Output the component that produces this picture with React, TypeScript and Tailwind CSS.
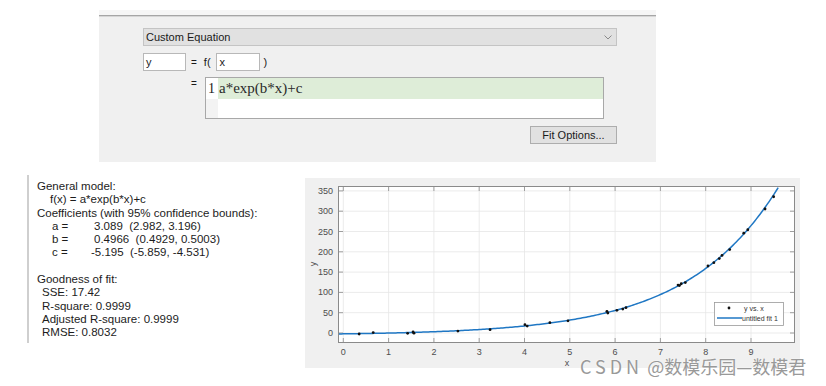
import React from "react";

const f = (x: number) => 3.089 * Math.exp(0.4966 * x) - 5.195;
const px = (x: number) => 38.3 + 45.3 * x;
const py = (y: number) => 155 - 0.406 * y;

// sampled data (x, small noise on y)
const data: [number, number][] = [
  [0.35, 1], [0.66, -2], [1.42, 2], [1.54, -1], [1.56, 2], [2.53, 1],
  [3.24, 2], [4.01, -3], [4.06, 1], [4.56, -1], [4.96, 1], [5.82, -3],
  [5.84, 2], [6.04, 1], [6.17, 2], [6.24, 1], [7.39, -2], [7.42, 1],
  [7.46, -1], [7.55, 2], [8.05, -2], [8.18, 1], [8.3, 2], [8.36, 0],
  [8.53, 3], [8.84, -2], [8.93, 1], [9.31, 4], [9.5, 5],
];

const curve = () => {
  const parts: string[] = [];
  for (let x = -0.12; x <= 9.63; x += 0.04) {
    parts.push(`${parts.length ? "L" : "M"}${px(x).toFixed(2)},${py(f(x)).toFixed(2)}`);
  }
  return parts.join(" ");
};

const Plot = () => {
  const xt = [0, 1, 2, 3, 4, 5, 6, 7, 8, 9];
  const yt = [0, 50, 100, 150, 200, 250, 300, 350];
  return (
    <svg width="495" height="190" viewBox="0 0 495 190" className="block">
      <rect x="0" y="0" width="495" height="190" fill="#f0f0f0" />
      <rect x="33.5" y="8.5" width="456" height="156" fill="#ffffff" />
      {xt.map((t) => (
        <line key={"gx" + t} x1={px(t)} x2={px(t)} y1="9" y2="164" stroke="#e6e6e6" strokeWidth="0.8" />
      ))}
      {yt.map((t) => (
        <line key={"gy" + t} x1="34" x2="489" y1={py(t)} y2={py(t)} stroke="#e6e6e6" strokeWidth="0.8" />
      ))}
      <rect x="33.5" y="8.5" width="456" height="156" fill="none" stroke="#8a8a8a" strokeWidth="1" />
      {xt.map((t) => (
        <g key={"tx" + t} stroke="#8a8a8a" strokeWidth="0.8">
          <line x1={px(t)} x2={px(t)} y1="164" y2="160" />
          <line x1={px(t)} x2={px(t)} y1="9" y2="13" />
        </g>
      ))}
      {yt.map((t) => (
        <g key={"ty" + t} stroke="#8a8a8a" strokeWidth="0.8">
          <line x1="34" x2="38" y1={py(t)} y2={py(t)} />
          <line x1="489" x2="485" y1={py(t)} y2={py(t)} />
        </g>
      ))}
      <g fontFamily="'Liberation Sans', Arial, sans-serif" fontSize="9" fill="#4d4d4d">
        {xt.map((t) => (
          <text key={"lx" + t} x={px(t)} y="177" textAnchor="middle">{t}</text>
        ))}
        {yt.map((t) => (
          <text key={"ly" + t} x="28" y={py(t) + 3} textAnchor="end">{t}</text>
        ))}
        <text x="262" y="188" textAnchor="middle">x</text>
        <text x="0" y="0" textAnchor="middle" transform="translate(11,86) rotate(-90)">y</text>
      </g>
      <clipPath id="axclip">
        <rect x="34" y="9" width="455" height="155" />
      </clipPath>
      <path d={curve()} fill="none" stroke="#1f77c4" strokeWidth="1.5" clipPath="url(#axclip)" />
      {data.map(([x, n], i) => (
        <circle key={i} cx={px(x)} cy={py(f(x)) + n * 0.4} r="1.4" fill="#111" />
      ))}
      <rect x="409.5" y="124.5" width="69" height="23" fill="#ffffff" stroke="#9a9a9a" strokeWidth="0.8" />
      <circle cx="424" cy="130" r="1.4" fill="#111" />
      <line x1="412" x2="437" y1="140" y2="140" stroke="#1f77c4" strokeWidth="1.5" />
      <g fontFamily="'Liberation Sans', Arial, sans-serif" fontSize="7" fill="#333">
        <text x="439" y="133">y vs. x</text>
        <text x="437" y="143">untitled fit 1</text>
      </g>
    </svg>
  );
};

const Chevron = () => (
  <svg width="8" height="5" viewBox="0 0 8 5" className="block">
    <path d="M0.5 0.5 L4 4 L7.5 0.5" fill="none" stroke="#8a8a8a" strokeWidth="1" />
  </svg>
);

const FitPanel = () => (
  <div className="ml-[99px] mt-[10px] w-[557px] h-[152px] flex flex-col">
    <div className="h-[5px] bg-[#f6f6f6]" />
    <div className="h-[1px] bg-[#a6a6a6]" />
    <div className="h-[1px] bg-[#d6d6d6]" />
    <div className="flex-1 bg-[#f0f0f0] pl-[44px] pt-[11px]">
      <div className="w-[474px] flex flex-col">
        <div className="h-[18px] bg-[#e1e1e1] border border-[#c4c4c4] flex items-center justify-between pl-[2px] pr-[4px] text-[11px] text-[#1a1a1a]">
          <span>Custom Equation</span>
          <Chevron />
        </div>
        <div className="mt-[7px] h-[18px] flex items-center text-[11px] text-[#1a1a1a]">
          <div className="w-[43px] h-[18px] bg-white border border-[#b8b8b8] pl-[2px] leading-[16px]">y</div>
          <span className="ml-[5px] text-[10px]">=</span>
          <span className="ml-[7px]">f(</span>
          <div className="ml-[5px] w-[44px] h-[18px] bg-white border border-[#b8b8b8] pl-[3px] leading-[16px]">x</div>
          <span className="ml-[4px]">)</span>
        </div>
        <div className="mt-[6px] flex items-start">
          <span className="ml-[48px] w-[14px] text-[10px] leading-[14px] text-[#1a1a1a]">=</span>
          <div className="w-[399px] h-[42px] bg-white border border-[#a8a8a8] flex">
            <div className="w-[12px] bg-[#f3f3f3] flex flex-col">
              <div className="h-[21px] bg-white pl-[2px] font-['Liberation_Serif',serif] text-[14px] leading-[21px] text-[#222]">1</div>
            </div>
            <div className="flex-1 flex flex-col">
              <div className="h-[21px] bg-[#deedd8] pl-[1px] font-['Liberation_Serif',serif] text-[15px] leading-[21px] text-[#2a2a2a]">
                a*exp(b*x)+c
              </div>
            </div>
          </div>
        </div>
        <div className="mt-[7px] flex justify-end">
          <div className="w-[87px] h-[18px] bg-[#e1e1e1] border border-[#adadad] flex items-center justify-center text-[11px] text-[#1a1a1a]">
            Fit Options...
          </div>
        </div>
      </div>
    </div>
  </div>
);

const Results = () => (
  <div className="ml-[27px] mt-[13px] w-[250px] h-[168px] border-l-2 border-[#cfcfcf] pl-[8px] text-[11.5px] leading-[13.3px] text-[#1c1c1c]">
    <div className="pt-[5px]">General model:</div>
    <div className="pl-[13px]">f(x) = a*exp(b*x)+c</div>
    <div>Coefficients (with 95% confidence bounds):</div>
    <div className="pl-[15px] flex"><span className="w-[39px]">a =</span><span className="pl-[3px]">3.089&nbsp; (2.982, 3.196)</span></div>
    <div className="pl-[15px] flex"><span className="w-[39px]">b =</span><span className="pl-[3px]">0.4966&nbsp; (0.4929, 0.5003)</span></div>
    <div className="pl-[15px] flex"><span className="w-[39px]">c =</span><span>-5.195&nbsp; (-5.859, -4.531)</span></div>
    <div className="h-[13.3px]" />
    <div>Goodness of fit:</div>
    <div className="pl-[5px]">SSE: 17.42</div>
    <div className="pl-[5px]">R-square: 0.9999</div>
    <div className="pl-[5px]">Adjusted R-square: 0.9999</div>
    <div className="pl-[5px]">RMSE: 0.8032</div>
  </div>
);

export default function App() {
  return (
    <div className="relative w-[826px] h-[386px] bg-white overflow-hidden font-['Liberation_Sans',Arial,sans-serif]">
      <FitPanel />
      <div className="flex items-start">
        <Results />
        <div className="ml-[28px] mt-[16px]">
          <Plot />
        </div>
      </div>
      <div className="absolute left-[580px] top-[357px] text-[18px] leading-[18px] text-[#999999] font-['Noto_Sans_CJK_SC',sans-serif] [text-shadow:0_0_2px_#ffffff] whitespace-nowrap">
        <span className="tracking-[4px]">CSDN</span> @数模乐园—数模君
      </div>
    </div>
  );
}
